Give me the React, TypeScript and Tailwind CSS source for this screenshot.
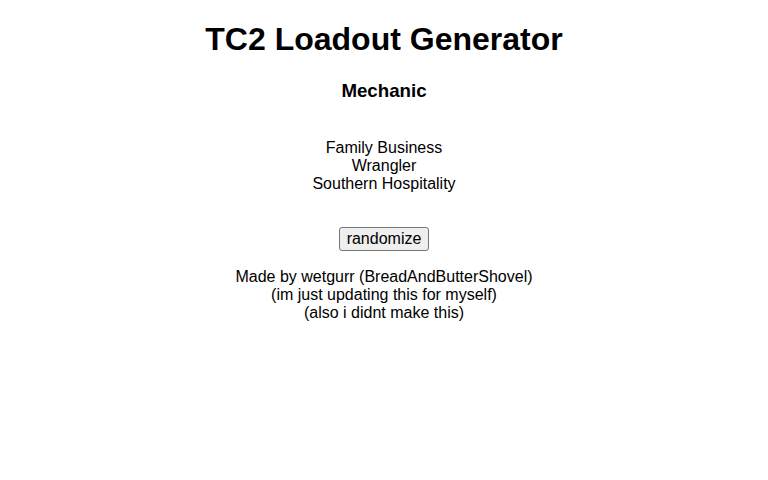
export default function App() {
  return (
    <div className="min-h-[480px] bg-white text-black text-center font-['Liberation_Sans',Arial,sans-serif]">
      <h1 className="pt-[21px] text-[32px] font-bold leading-[37px]">TC2 Loadout Generator</h1>
      <h3 className="mt-[22px] text-[18.72px] font-bold leading-[21.5px]">Mechanic</h3>

      <div className="mt-[37px] text-base leading-[18px]">
        <div>Family Business</div>
        <div>Wrangler</div>
        <div>Southern Hospitality</div>
      </div>

      <div className="mt-[34px] flex justify-center">
        <button className="rounded-[3px] border border-[#767676] bg-[#efefef] px-[7px] py-[1.5px] text-base leading-[19px] text-black">
          randomize
        </button>
      </div>

      <div className="mt-[17px] text-base leading-[18px]">
        <div>Made by wetgurr (BreadAndButterShovel)</div>
        <div>(im just updating this for myself)</div>
        <div>(also i didnt make this)</div>
      </div>
    </div>
  );
}
